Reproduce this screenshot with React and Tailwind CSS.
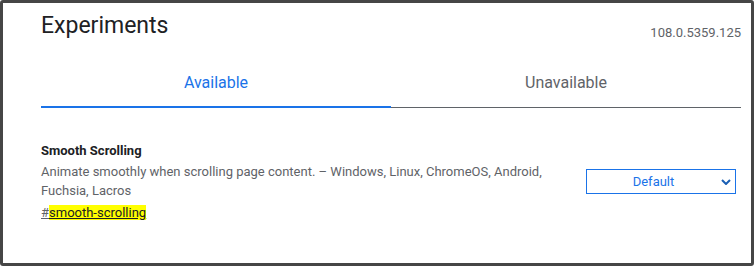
export default function App() {
  return (
    <div
      className="w-[754px] h-[266px] bg-white border-[3px] border-[#464646] rounded-[3px] overflow-hidden"
      style={{ fontFamily: "Roboto, 'Liberation Sans', sans-serif" }}
    >
      <div className="pl-[38px] pr-[10px] pt-[9px]">
        <div className="flex items-end justify-between">
          <h1 className="text-[23px] leading-[28px] text-[#202124] font-normal">Experiments</h1>
          <span className="text-[13px] leading-[16px] text-[#5f6368] mb-[-1px]">108.0.5359.125</span>
        </div>

        <div className="flex mt-[19px]">
          <div className="flex-1 text-center text-[16px] leading-[20px] text-[#1a73e8] pt-[14px] pb-[13px] border-b-2 border-[#1a73e8]">
            Available
          </div>
          <div className="flex-1 text-center text-[16px] leading-[20px] text-[#5f6368] pt-[14px] pb-[13px] border-b border-[#5f6368]">
            Unavailable
          </div>
        </div>

        <div className="flex items-center mt-[33px] pr-[5px]">
          <div className="w-[520px] text-[13px]">
            <div className="font-bold leading-[19px] text-[#202124]">Smooth Scrolling</div>
            <p className="leading-[19px] text-[#5f6368] mt-[2px]">
              Animate smoothly when scrolling page content. – Windows, Linux, ChromeOS, Android, Fuchsia, Lacros
            </p>
            <a className="block leading-[19px] mt-[3px] text-[#5f6368] underline">
              #<mark className="bg-[#ffff00] text-[#202124] underline">smooth-scrolling</mark>
            </a>
          </div>
          <div className="ml-auto w-[150px] h-[25px] border border-[#1a73e8] flex items-center">
            <span className="flex-1 text-center text-[13px] text-[#1a73e8]">Default</span>
            <svg width="10" height="6" viewBox="0 0 10 6" className="ml-[1px] mr-[4px]">
              <polyline points="1,1 5,5 9,1" fill="none" stroke="#1a5fb4" strokeWidth="2" />
            </svg>
          </div>
        </div>
      </div>
    </div>
  );
}
